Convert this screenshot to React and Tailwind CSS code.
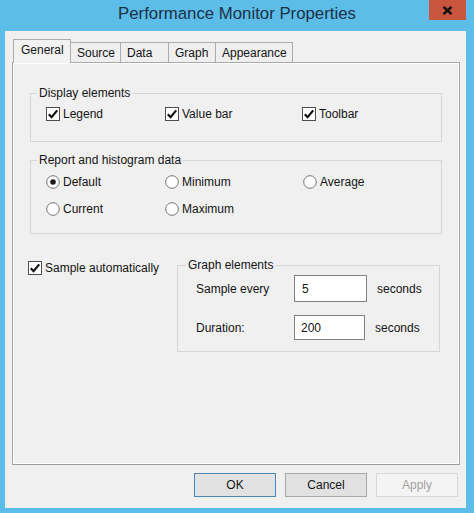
import React from "react";

function Check({ label, className = "" }) {
  return (
    <div className={`flex items-center h-[16px] ${className}`}>
      <svg width="14" height="14" viewBox="0 0 14 14" className="shrink-0">
        <rect x="0.5" y="0.5" width="13" height="13" fill="#fff" stroke="#4d4d4d" />
        <path d="M2.8 7.2 L5.6 10.2 L11.2 3.4" fill="none" stroke="#111" strokeWidth="2.2" />
      </svg>
      <span className="ml-[3px]">{label}</span>
    </div>
  );
}

function Radio({ label, checked }) {
  return (
    <div className="flex items-center h-[16px]">
      <svg width="14" height="14" viewBox="0 0 14 14" className="shrink-0">
        <circle cx="7" cy="7" r="6.3" fill="#fff" stroke="#737373" />
        {checked && <circle cx="7" cy="7" r="2.8" fill="#1b1b1b" />}
      </svg>
      <span className="ml-[3px]">{label}</span>
    </div>
  );
}

function Tab({ label, w, selected }) {
  if (selected) {
    return (
      <div
        className={`relative z-10 -mb-px h-[24px] ${w} border border-b-0 border-[#acacac] bg-[#f2f2f2] pl-[7px] pt-[3px] leading-[14px]`}
      >
        {label}
      </div>
    );
  }
  return (
    <div
      className={`h-[20px] ${w} border border-l-0 border-b-0 border-[#acacac] bg-[#efefef] pl-[6px] pt-[3px] leading-[14px]`}
    >
      {label}
    </div>
  );
}

export default function App() {
  return (
    <div className="w-[474px] h-[513px] bg-[#5cbde9] flex flex-col font-['Liberation_Sans',Arial,sans-serif] text-[12px] text-[#141414]">
      {/* Title bar */}
      <div className="h-[31px] grid grid-cols-[1fr_auto_1fr] shrink-0">
        <div />
        <div className="text-[16.8px] leading-[20px] pt-[4px] text-[#1a3047]">
          Performance Monitor Properties
        </div>
        <div className="justify-self-end mr-[8px] w-[37px] h-[20px] bg-[#c9553f] flex items-center justify-center">
          <svg width="11" height="9" viewBox="0 0 11 9">
            <path d="M1.5 0.8 L9.5 8.2 M9.5 0.8 L1.5 8.2" stroke="#111" strokeWidth="2.4" />
          </svg>
        </div>
      </div>

      {/* Client */}
      <div className="ml-[5px] mr-[8px] mb-[5px] flex-1 bg-[#f0f0f0] flex flex-col pl-[7px] pr-[6px] pt-[8px]">
        {/* Tabs */}
        <div className="flex items-end pl-px">
          <Tab label="General" w="w-[58px]" selected />
          <Tab label="Source" w="w-[50px]" />
          <Tab label="Data" w="w-[48px]" />
          <Tab label="Graph" w="w-[47px]" />
          <Tab label="Appearance" w="w-[77px]" />
        </div>

        {/* Panel */}
        <div className="flex-1 border border-[#a9a9a9] border-b-[#9a9a9a] bg-[#f0f0f0] shadow-[inset_1px_1px_0_#ffffff,inset_-1px_-1px_0_#ffffff] px-[17px] pt-[23px] flex flex-col">
          {/* Display elements */}
          <fieldset className="border border-[#d6d6d6] pb-[19px]">
            <legend className="ml-[6px] px-[2px] leading-[14px]">Display elements</legend>
            <div className="grid grid-cols-[119px_137px_auto] pl-[15px] pt-[6px]">
              <Check label="Legend" />
              <Check label="Value bar" />
              <Check label="Toolbar" />
            </div>
          </fieldset>

          {/* Report and histogram data */}
          <fieldset className="border border-[#d6d6d6] mt-[11px] pb-[16px]">
            <legend className="ml-[6px] px-[2px] leading-[14px]">Report and histogram data</legend>
            <div className="grid grid-cols-[119px_138px_auto] gap-y-[11px] pl-[15px] pt-[7px]">
              <Radio label="Default" checked />
              <Radio label="Minimum" />
              <Radio label="Average" />
              <Radio label="Current" />
              <Radio label="Maximum" />
            </div>
          </fieldset>

          {/* Sample automatically + Graph elements */}
          <div className="flex justify-between items-start mt-[24px]">
            <Check label="Sample automatically" className="-ml-[2px] mt-[2px]" />
            <fieldset className="w-[263px] mr-[2px] border border-[#d6d6d6] pb-[11px]">
              <legend className="ml-[8px] px-[2px] leading-[14px]">Graph elements</legend>
              <div className="flex flex-col pl-[18px] pt-[3px]">
                <div className="flex items-center">
                  <span className="w-[98px]">Sample every</span>
                  <div className="w-[73px] h-[27px] bg-white border border-[#7f8185] flex items-center pl-[7px]">5</div>
                  <span className="ml-[10px]">seconds</span>
                </div>
                <div className="flex items-center mt-[13px]">
                  <span className="w-[98px]">Duration:</span>
                  <div className="w-[71px] h-[25px] bg-white border border-[#7f8185] flex items-center pl-[6px]">200</div>
                  <span className="ml-[10px]">seconds</span>
                </div>
              </div>
            </fieldset>
          </div>
        </div>

        {/* Buttons */}
        <div className="flex justify-end gap-[9px] mt-[8px] mb-[11px] pr-[2px]">
          <div className="w-[82px] h-[24px] border border-[#4d87ba] bg-[#e2e2e2] flex items-center justify-center">OK</div>
          <div className="w-[82px] h-[24px] border border-[#a8a8a8] bg-[#e1e1e1] flex items-center justify-center">Cancel</div>
          <div className="w-[82px] h-[24px] border border-[#d6d6d6] bg-[#f4f4f4] text-[#a2a2a2] flex items-center justify-center">Apply</div>
        </div>
      </div>
    </div>
  );
}
